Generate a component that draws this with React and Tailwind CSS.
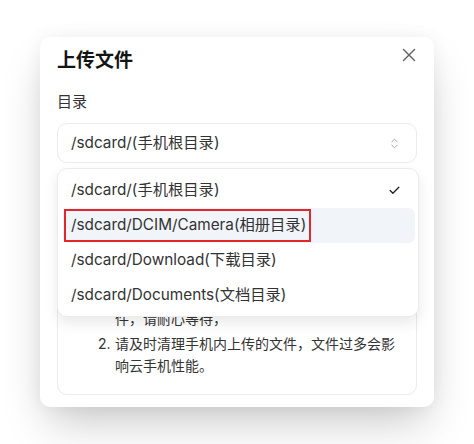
import { Check, ChevronsUpDown, X } from 'lucide-react'

const dirs = [
  '/sdcard/(手机根目录)',
  '/sdcard/DCIM/Camera(相册目录)',
  '/sdcard/Download(下载目录)',
  '/sdcard/Documents(文档目录)',
]

const tips = [
  '上传期间请勿关闭窗口，系统正在处理您的文件，请耐心等待，',
  '请及时清理手机内上传的文件，文件过多会影响云手机性能。',
]

export default function App() {
  const selected = 0
  const active = 1

  return (
    <div className="min-h-screen bg-white flex items-center justify-center [font-family:Inter,'Noto_Sans_CJK_SC',sans-serif]">
      <div className="relative w-[394px] h-[370px] overflow-hidden bg-white rounded-[10px] px-[17px] pt-[10px] shadow-[0_22px_45px_-8px_rgba(0,0,0,0.22),0_0_18px_rgba(0,0,0,0.05)]">
        <button className="absolute top-[7px] right-[14px] text-[#666]">
          <X size={22} strokeWidth={1.6} />
        </button>

        <h2 className="text-[19px] leading-[28px] font-bold text-[#141414]">上传文件</h2>

        <p className="mt-4 text-[15px] leading-[22px] text-[#333]">目录</p>

        {/* 目录选择 */}
        <div className="relative mt-[10px] z-10">
          <div className="h-[40px] flex items-center justify-between pl-[13px] pr-[15px] border border-[#ebebeb] rounded-[10px] bg-white">
            <span className="text-[15.3px] text-[#333]">{dirs[selected]}</span>
            <ChevronsUpDown size={13} strokeWidth={1.8} className="text-[#aaa]" />
          </div>

          <div className="absolute left-0 right-[-2px] top-[calc(100%+5px)] bg-white border border-[#ececec] rounded-[10px] pt-[4px] pb-[3px] shadow-[0_6px_14px_rgba(0,0,0,0.09)]">
            {dirs.map((d, i) => (
              <div
                key={d}
                className={
                  'h-[35px] flex items-center justify-between ml-[5px] mr-[3px] rounded-[7px] pr-[14px] ' +
                  (i === active ? 'bg-[#f1f4f8] pl-px' : 'pl-[8px]')
                }
              >
                {i === active ? (
                  <span className="h-[33px] flex items-center border-2 border-[#e3262b] pl-[5px] pr-[3px] text-[15.3px] text-[#333]">
                    {d}
                  </span>
                ) : (
                  <span className="text-[15.3px] text-[#333]">{d}</span>
                )}
                {i === selected && <Check size={13} strokeWidth={2.4} className="text-[#222]" />}
              </div>
            ))}
          </div>
        </div>

        {/* 提示 */}
        <div className="mt-4 border border-[#ebebeb] rounded-[10px] pl-[40px] pr-[16px] pt-[15px] pb-[17px] text-[14px] leading-[22px] text-[#333]">
          <p className="font-semibold">上传说明</p>
          <p className="mt-[3px]">
            支持上传图片、视频、文档等常见类型的文件，单个文件大小不超过2GB，上传完成后可在所选目录中查看。
          </p>
          <ol className="space-y-[3px]">
            {tips.map((t, i) => (
              <li key={i} className="flex">
                <span className="w-[17px] shrink-0">{i + 1}.</span>
                <span>{t}</span>
              </li>
            ))}
          </ol>
        </div>
      </div>
    </div>
  )
}
